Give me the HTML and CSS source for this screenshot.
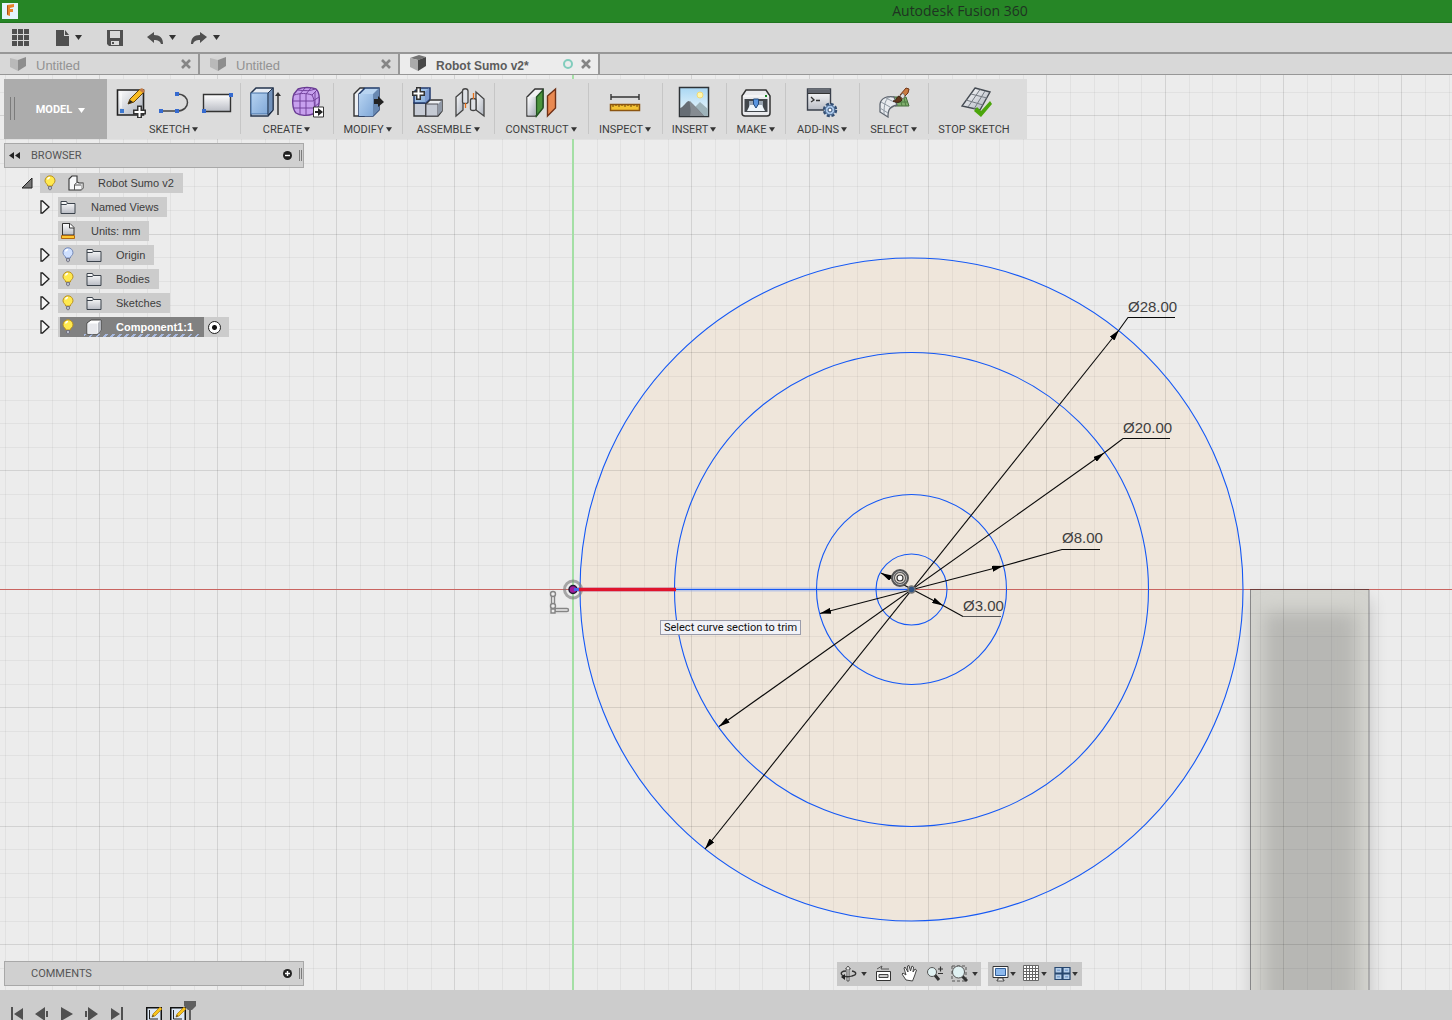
FILE: index.html
```html
<!DOCTYPE html>
<html lang="en">
<head>
<meta charset="utf-8">
<title>Autodesk Fusion 360</title>
<link rel="stylesheet" href="styles.css">
</head>
<body>
<svg class="defs" aria-hidden="true">
  <defs>
    <linearGradient id="metal" x1="0" y1="0" x2="1" y2="1"><stop offset="0" stop-color="#fff"/><stop offset="1" stop-color="#aab0bb"/></linearGradient>
    <linearGradient id="sky" x1="0" y1="0" x2="0" y2="1"><stop offset="0" stop-color="#a9d7f3"/><stop offset="1" stop-color="#f2fafd"/></linearGradient>
    <linearGradient id="blue" x1="0" y1="0" x2="1" y2="1"><stop offset="0" stop-color="#b6d3f1"/><stop offset="1" stop-color="#80a8d8"/></linearGradient>
    <linearGradient id="vert" x1="0" y1="0" x2="0" y2="1"><stop offset="0" stop-color="#fff"/><stop offset="1" stop-color="#b9bcc4"/></linearGradient>
  </defs>
  <symbol id="caret" viewBox="0 0 7 5"><path d="M0 0h7L3.500 5z" fill="currentColor"/></symbol>
  <symbol id="cube" viewBox="0 0 16 16"><path d="M0 3 9 0l7 2-8 3z" fill="#d5d5d5"/><path d="M0 3l8 2v11l-8-4z" fill="#b9b9b9"/><path d="M8 5l8-3v9l-8 5z" fill="#8d8d8d"/></symbol>
  <symbol id="cube-dark" viewBox="0 0 16 16"><path d="M0 3 9 0l7 2-8 3z" fill="#747474"/><path d="M0 3l8 2v11l-8-4z" fill="#aaa"/><path d="M8 5l8-3v9l-8 5z" fill="#484848"/></symbol>
  <symbol id="close" viewBox="0 0 10 10"><path d="M1 1l8 8M9 1L1 9" stroke="#858585" stroke-width="2.600"/></symbol>
  <symbol id="bulb" viewBox="0 0 12 16"><path d="M6 .8a5 5 0 0 1 5 5C11 8.300 8.500 8.700 8.300 11H3.700C3.500 8.700 1 8.300 1 5.800a5 5 0 0 1 5-5z" fill="#ffe94f" stroke="#b99020"/><path d="M3.500 4.500c.5-1.500 1.500-2 2.500-2" stroke="#fff" stroke-width="1.400" fill="none"/><path d="M4.500 11.500h3v2.500L6 15l-1.500-1z" fill="#b7bcc8" stroke="#667" stroke-width=".8"/></symbol>
  <symbol id="bulb-off" viewBox="0 0 12 16"><path d="M6 .8a5 5 0 0 1 5 5C11 8.300 8.500 8.700 8.300 11H3.700C3.500 8.700 1 8.300 1 5.800a5 5 0 0 1 5-5z" fill="#cfe0ff" stroke="#7388b8"/><path d="M3.500 4.500c.5-1.500 1.500-2 2.500-2" stroke="#fff" stroke-width="1.400" fill="none"/><path d="M4.500 11.500h3v2.500L6 15l-1.500-1z" fill="#b7bcc8" stroke="#667" stroke-width=".8"/></symbol>
  <symbol id="folder" viewBox="0 0 16 16"><path d="M1 14.500v-12h5.500l1 2H15v10z" fill="url(#vert)" stroke="#3b424b"/><path d="M1 5.500h5l1.500-1" fill="none" stroke="#3b424b"/></symbol>
  <symbol id="twisty" viewBox="0 0 10 14"><path d="M1 1h1.500L9 7l-6.500 6H1z" fill="#f5f5f5" stroke="#222" stroke-width="1.300"/></symbol>
  <symbol id="sketch-tl" viewBox="0 0 16 16"><path d="M.75 .75h14.500v14.500H.75z" fill="#dce8f5" stroke="#111" stroke-width="1.500"/><path d="M3.500 3v9H12" fill="none" stroke="#222"/><path d="M6 10l1-3 7-7 2 2-7 7z" fill="#f8c51c" stroke="#a8760a" stroke-width=".7"/><path d="M6 10l1-2 1 1z" fill="#222"/></symbol>
</svg>

<header class="titlebar">
  <svg class="logo" width="16" height="16" viewBox="0 0 16 16" role="img" aria-label="Fusion"><path d="M0 0h16v16H0z" fill="#e4f4fd"/><path d="M5 2l7-1v3l-4 1v1h3v3H8v4l-3-1z" fill="#e8842a"/><path d="M5 2l1 1v9l-1-1z" fill="#a84e15"/></svg>
  <h1>Autodesk Fusion 360</h1>
</header>

<nav class="quick" aria-label="Quick access">
  <button class="q-grid" aria-label="Data panel"><svg width="17" height="17"><path d="M0 0h5v5H0zM6 0h5v5H6zM12 0h5v5h-5zM0 6h5v5H0zM6 6h5v5H6zM12 6h5v5h-5zM0 12h5v5H0zM6 12h5v5H6zM12 12h5v5h-5z" fill="#505050"/></svg></button>
  <button class="q-file" aria-label="File"><svg width="13" height="16"><path d="M0 0h8v6h5v10H0zM9 0l4 5H9z" fill="#505050"/></svg><svg class="caret"><use href="#caret"/></svg></button>
  <button class="q-save" aria-label="Save"><svg width="16" height="16"><path d="M0 0h16v16H2l-2-2z" fill="#505050"/><path d="M3 1h10v7H3zM4 11h8v4H4z" fill="#dadada"/><path d="M5 12h2v2H5z" fill="#505050"/></svg></button>
  <button class="q-undo" aria-label="Undo"><svg width="16" height="12"><path d="M0 5l7-5v3c6 0 9 3 9 9h-2c-1-3-3-4-7-4v3z" fill="#505050"/></svg><svg class="caret"><use href="#caret"/></svg></button>
  <button class="q-redo" aria-label="Redo"><svg width="16" height="12"><path d="M16 5L9 0v3C3 3 0 6 0 12h2c1-3 3-4 7-4v3z" fill="#505050"/></svg><svg class="caret"><use href="#caret"/></svg></button>
</nav>

<div class="tabs">
  <div class="tab"><svg width="16" height="16"><use href="#cube"/></svg><a href="#doc1">Untitled</a><button aria-label="Close"><svg width="10" height="10"><use href="#close"/></svg></button></div>
  <div class="tab"><svg width="16" height="16"><use href="#cube"/></svg><a href="#doc2">Untitled</a><button aria-label="Close"><svg width="10" height="10"><use href="#close"/></svg></button></div>
  <div class="tab active"><svg width="16" height="16"><use href="#cube-dark"/></svg><a href="#doc3">Robot Sumo v2*</a><i class="status"></i><button aria-label="Close"><svg width="10" height="10"><use href="#close"/></svg></button></div>
</div>

<main class="workspace">
  <svg class="canvas" aria-label="Sketch canvas">
    <defs>
      <pattern id="grid" patternUnits="userSpaceOnUse" x="573" y="589" width="592" height="592">
        <path stroke="#000" stroke-opacity=".048" d="M24.500 0v592M47.500 0v592M71.500 0v592M95.500 0v592M142.500 0v592M166.500 0v592M189.500 0v592M213.500 0v592M260.500 0v592M284.500 0v592M308.500 0v592M332.500 0v592M379.500 0v592M403.500 0v592M426.500 0v592M450.500 0v592M497.500 0v592M521.500 0v592M545.500 0v592M568.500 0v592M0 24.500h592M0 47.500h592M0 71.500h592M0 95.500h592M0 142.500h592M0 166.500h592M0 189.500h592M0 213.500h592M0 260.500h592M0 284.500h592M0 308.500h592M0 332.500h592M0 379.500h592M0 403.500h592M0 426.500h592M0 450.500h592M0 497.500h592M0 521.500h592M0 545.500h592M0 568.500h592"/>
        <path stroke="#000" stroke-opacity=".11" d="M.5 0v592M118.500 0v592M236.500 0v592M355.500 0v592M473.500 0v592M0 .5h592M0 118.500h592M0 237.500h592M0 355.500h592M0 473.500h592"/>
      </pattern>
      <filter id="soft" x="-50%" y="-20%" width="200%" height="140%"><feGaussianBlur stdDeviation="9"/></filter>
      <clipPath id="body-clip"><path d="M1250 589h119v2000h-119z"/></clipPath>
      <marker id="arrow" viewBox="0 0 11 6" refX="11" refY="3" markerWidth="11" markerHeight="6" markerUnits="userSpaceOnUse" orient="auto-start-reverse"><path d="M0 0l11 3-11 3z" fill="#000"/></marker>
    </defs>
    <g transform="translate(0 -75)">
      <path d="M1252 600h118v2000h-118z" fill="#000" opacity=".18" filter="url(#soft)"/>
      <path d="M1250 589h119v2000h-119z" fill="#d4d4cf"/>
      <g clip-path="url(#body-clip)"><path d="M1264 612h93v2000h-93z" fill="#b7b7b4" filter="url(#soft)"/></g>
      <circle cx="911.500" cy="589.500" r="331.500" fill="#efe6db"/>
      <rect y="0" width="100%" height="200%" fill="url(#grid)"/>
      <path d="M1250.500 2000V589.500M1369 2000V589.500" stroke="#55555a" stroke-opacity=".6" fill="none"/>
      <path d="M573 0v2000" stroke="#a4dfa5" stroke-width="2"/>
      <path d="M0 589.500h4000" stroke="#c96460"/>
      <path d="M1250 589.500h119" stroke="#703c3a"/>
      <path d="M573 589.500h338" stroke="#8aa6ee" stroke-opacity=".5" stroke-width="4"/>
      <g fill="none" stroke="#1458f5" stroke-width="1.100"><circle cx="911.500" cy="589.500" r="331.500"/><circle cx="911.500" cy="589.500" r="237"/><circle cx="911.500" cy="589.500" r="95"/><circle cx="911.500" cy="589.500" r="35.500"/><path d="M573 589.500h338"/></g>
      <g fill="none" stroke="#0a0a0a" stroke-width="1.100">
        <path d="M705 849L1119 330" marker-start="url(#arrow)" marker-end="url(#arrow)"/><path d="M1119 330l9-12.500h47"/>
        <path d="M719 726.500L1104 453" marker-start="url(#arrow)" marker-end="url(#arrow)"/><path d="M1104 453l19-14.500h47"/>
        <path d="M820 613.500L1003 566" marker-start="url(#arrow)" marker-end="url(#arrow)"/><path d="M1003 566l59-16.500h38"/>
        <path d="M881 573L943 605.500" marker-start="url(#arrow)" marker-end="url(#arrow)"/><path d="M943 605.500l20 11"/><path d="M963 616.500h38" stroke="#555"/>
      </g>
      <g class="dims"><text x="1128" y="312">Ø28.00</text><text x="1123" y="433">Ø20.00</text><text x="1062" y="543">Ø8.00</text><text x="963" y="611">Ø3.00</text></g>
      <circle cx="573" cy="589.500" r="8.500" fill="none" stroke="#777" stroke-opacity=".6" stroke-width="3"/>
      <path d="M578 589.500h98" stroke="#e0142c" stroke-width="3.400"/>
      <circle cx="573" cy="589.500" r="4" fill="#a01c9c" stroke="#241a33" stroke-width="1.500"/><path d="M574 589.500h5" stroke="#4565e8" stroke-width="3"/>
      <circle cx="911.500" cy="589.500" r="3.500" fill="#315587" stroke="#777" stroke-width="1.500"/>
      <circle cx="900" cy="578" r="7" fill="#e4ddd4" stroke="#555" stroke-width="4"/><circle cx="900" cy="578" r="6.500" fill="none" stroke="#bbb"/><circle cx="900" cy="578" r="3" fill="#fff" stroke="#333" stroke-width="1.200"/>
      <g fill="#eee" stroke="#858585" stroke-width="1.400"><path d="M551.500 595h3v12h-3zM555 608.500h12a1.500 1.500 0 0 1 0 3h-12z"/><circle cx="553" cy="594" r="2.500"/><circle cx="553" cy="606" r="2.500"/><path d="M551 609h4v4h-4z"/></g>
    </g>
  </svg>
  <div class="tooltip" role="tooltip">Select curve section to trim</div>

  <div class="ribbon">
    <button class="model"><i class="grip"></i><span>MODEL</span><svg class="caret"><use href="#caret"/></svg></button>
    <section class="group g-sketch"><div class="icons">
      <button aria-label="Create sketch"><svg width="32" height="32"><path d="M2.500 4h26v25h-26z" fill="url(#metal)" stroke="#222" stroke-width="1.600"/><path d="M6 7v15" stroke="#fff"/><path d="M5 23h4v4H5z" fill="#3c78d0"/><path d="M13 18l2-5L25 3l4 3-10 10z" fill="#f8bc20" stroke="#65430a"/><path d="M24 4l4 3 2-2-3-3z" fill="#c47a44"/><path d="M13 18l2-4 3 2z" fill="#222"/><path d="M22 19.500h5v4h4v5h-4V32h-5v-3.500h-4v-5h4z" fill="#333"/><path d="M23.500 21h2v4h4v2h-4v4h-2v-4h-4v-2h4z" fill="#fff"/></svg></button>
      <button aria-label="Line"><svg width="32" height="32"><path d="M3 25h16c14 0 14-17 0-17" fill="none" stroke="#444" stroke-width="1.500"/><path d="M1 23h4v4H1zM17 23h4v4h-4zM17 6h4v4h-4z" fill="#366bd0"/></svg></button>
      <button aria-label="Rectangle"><svg width="32" height="32"><path d="M2.500 8.500h27v17h-27z" fill="url(#vert)" stroke="#333" stroke-width="1.400"/><path d="M1 23h4v4H1zM28 7h4v4h-4z" fill="#366bd0"/></svg></button>
    </div><button class="label">SKETCH <svg class="caret"><use href="#caret"/></svg></button></section>
    <section class="group g-create"><div class="icons">
      <button aria-label="Extrude"><svg width="32" height="32"><path d="M2 7l5-5h17v22l-5 6H2z" fill="#e7edf5" stroke="#25344d" stroke-width="1.500"/><path d="M2 7h17v21H2z" fill="url(#blue)" stroke="#4470a5"/><path d="M19 7l5-5v22l-5 5z" fill="#7292bb" stroke="#25344d"/><path d="M29 29V8" stroke="#333" stroke-width="1.500"/><path d="M26 10l3-4 3 4z" fill="#333"/></svg></button>
      <button aria-label="Create form"><svg width="32" height="32"><path d="M6 3c5-2 13-2 18 0 4 3 4 14 2 19l-5 6c-5 2-13 2-17-1C0 23 0 12 2 8z" fill="#c7a0ee" stroke="#693b93" stroke-width="1.400"/><path d="M2 9c7-2 12-2 18 0 3 5 3 13 1 19M8 8v21M14 8v22M1 15h20M1 22h20M6 4c6 1 13 1 17-1M20 9l5-5M21 15l6-4M21 22l6-5M13 2l-5 6M19 2l-5 6M23 6v19" fill="none" stroke="#72429c"/><path d="M21.500 21h10v10h-10z" fill="#fff" stroke="#333"/><path d="M23 25h3v-3l5 4-5 4v-3h-3z" fill="#222"/></svg></button>
    </div><button class="label">CREATE <svg class="caret"><use href="#caret"/></svg></button></section>
    <section class="group g-modify"><div class="icons">
      <button aria-label="Press pull"><svg width="32" height="32"><path d="M2 8l6-6h4v28H2z" fill="#eceff3" stroke="#333" stroke-width="1.400"/><path d="M7 8l6-6h14v22l-6 6H7z" fill="#b8d4f1" stroke="#203b6a" stroke-width="1.500"/><path d="M7 8h14v22H7z" fill="url(#blue)"/><path d="M21 8l6-6v22l-6 6z" fill="#6888b1"/><path d="M22 13h4v-3l6 6-6 5v-3h-4z" fill="#222"/></svg></button>
    </div><button class="label">MODIFY <svg class="caret"><use href="#caret"/></svg></button></section>
    <section class="group g-assemble"><div class="icons">
      <button aria-label="New component"><svg width="32" height="32"><path d="M3 17h12v13H3z" fill="#c7ccd6" stroke="#333" stroke-width="1.400"/><path d="M15 18l4-4h12v11l-4 5H15z" fill="#eceef2" stroke="#333" stroke-width="1.400"/><path d="M15 18h12v12H15z" fill="#c5cad4" stroke="#4c4c55"/><path d="M27 18l4-4v11l-4 4z" fill="#9098a6"/><path d="M3 6l4-4h12v11l-5 4H3z" fill="url(#blue)" stroke="#20396c" stroke-width="1.500"/><path d="M14 6l4-4v11l-4 4z" fill="#7c9acf"/><path d="M5 1h5v4h4v5h-4v4H5v-4H1V5h4z" fill="#333"/><path d="M6.500 2.500h2v4h4v2h-4v4h-2v-4h-4v-2h4z" fill="#fff"/></svg></button>
      <button aria-label="Joint"><svg width="32" height="32"><path d="M2 11l7-6v19l-7 6z" fill="url(#metal)" stroke="#444" stroke-width="1.300"/><path d="M8.500 5c0-3 5.500-3 5.500 0v11c0 2-5.500 2-5.500 0z" fill="#dfe2e7" stroke="#444" stroke-width="1.300"/><path d="M22 6l8 7v17l-8-6z" fill="url(#metal)" stroke="#444" stroke-width="1.300"/><path d="M16.500 14c0-2 5.500-2 5.500 0v9c0 2-5.500 2-5.500 0z" fill="#dfe2e7" stroke="#444" stroke-width="1.300"/><path d="M11.500 17v5M19.500 7v6" stroke="#e86f16" stroke-width="1.300"/></svg></button>
    </div><button class="label">ASSEMBLE <svg class="caret"><use href="#caret"/></svg></button></section>
    <section class="group g-construct"><div class="icons">
      <button aria-label="Offset plane"><svg width="32" height="32"><path d="M2 11l8-8h8v18l-7 9H2z" fill="#f1f1f2" stroke="#333" stroke-width="1.400"/><path d="M2.500 11h8v18.500h-8z" fill="url(#metal)"/><path d="M11.500 11l6.500-7v18l-6.500 8z" fill="#4a943c" stroke="#235323" stroke-width="1.400"/><path d="M22.500 10l8-7v19l-8 8z" fill="#e98951" stroke="#713116" stroke-width="1.400"/></svg></button>
    </div><button class="label">CONSTRUCT <svg class="caret"><use href="#caret"/></svg></button></section>
    <section class="group g-inspect"><div class="icons">
      <button aria-label="Measure"><svg width="32" height="32"><path d="M2 8v6M30 8v6M2 11h28" stroke="#333" stroke-width="1.400"/><path d="M1.500 18.500h29v6h-29z" fill="#f3c232" stroke="#8c5510" stroke-width="1.500"/><path d="M4 19v2M7 19v1M10 19v2M13 19v1M16 19v2M19 19v1M22 19v2M25 19v1M28 19v2" stroke="#704409"/></svg></button>
    </div><button class="label">INSPECT <svg class="caret"><use href="#caret"/></svg></button></section>
    <section class="group g-insert"><div class="icons">
      <button aria-label="Insert image"><svg width="32" height="32"><path d="M1.500 1.500h29v29h-29z" fill="url(#sky)" stroke="#2e3337" stroke-width="1.500"/><circle cx="22" cy="9" r="3" fill="#fff7ac" stroke="#f1da76"/><path d="M14 24l8-8 8 7v7H14z" fill="#9eb3ba"/><path d="M2 22c4-1 6-7 9-7 3 2 9 8 15 15H2z" fill="#666d74"/><path d="M12 15c-1 5 2 7 0 15h14z" fill="#858b91"/></svg></button>
    </div><button class="label">INSERT <svg class="caret"><use href="#caret"/></svg></button></section>
    <section class="group g-make"><div class="icons">
      <button aria-label="3D print"><svg width="32" height="32"><path d="M2 10l4-6h20l4 6v17c0 2-1 3-3 3H5c-2 0-3-1-3-3z" fill="#e9eaed" stroke="#333" stroke-width="1.500"/><path d="M3 10h26" stroke="#fff"/><path d="M4.500 13h23v13h-23z" fill="#42474c"/><path d="M9 15h14v9H9z" fill="#9aa6b3"/><path d="M7 25l3-6h12l3 6z" fill="#eef5fa"/><path d="M13.500 13h5v5l-2.500 4-2.500-4z" fill="#5996e1" stroke="#214879"/><path d="M25 9h2v2h-2z" fill="#138a20"/></svg></button>
    </div><button class="label">MAKE <svg class="caret"><use href="#caret"/></svg></button></section>
    <section class="group g-addins"><div class="icons">
      <button aria-label="Scripts"><svg width="32" height="32"><path d="M1.500 3h23v21h-23z" fill="url(#vert)" stroke="#3a404b" stroke-width="1.400"/><path d="M2 4h22v3H2z" fill="#62666f"/><path d="M2 7.500h22" stroke="#333"/><path d="M5 11l3 3-3 2M10 14.500h4" stroke="#333" fill="none" stroke-width="1.300"/><circle cx="24" cy="24" r="6" fill="#b9d1ed" stroke="#344f73" stroke-width="2.500" stroke-dasharray="3 1.700"/><circle cx="24" cy="24" r="4.800" fill="#a9c6e8" stroke="#46658d"/><circle cx="24" cy="24" r="2" fill="#fff" stroke="#344f73"/></svg></button>
    </div><button class="label">ADD-INS <svg class="caret"><use href="#caret"/></svg></button></section>
    <section class="group g-select"><div class="icons">
      <button aria-label="Select"><svg width="32" height="32"><path d="M15 11h13l3 9H17z" fill="#7fae6c" stroke="#456c3a"/><path d="M17 16h13M22 12l2 8M26 12l2 8" stroke="#4f7c42"/><path d="M16 11C9 10 3 12 2 18v8l8 5c0-7 1-10 9-12z" fill="#e8ebef" stroke="#5f6670" stroke-width="1.300"/><path d="M12 11c-5 2-6 8-6 17M2 22l8 5M3 16l9 5M8 12l8 4" fill="none" stroke="#909aa4"/><path d="M15 15c4 0 3-4 6-5l3 4c-2 3-6 3-9 1z" fill="#63371c" stroke="#3c2113"/><path d="M22 9l6-7 3 1-1 4-6 6z" fill="#c97a40" stroke="#713516"/><path d="M22 10l3 3 2-3-2-3z" fill="#ddd" stroke="#555" stroke-width=".6"/></svg></button>
    </div><button class="label">SELECT <svg class="caret"><use href="#caret"/></svg></button></section>
    <section class="group g-stop"><div class="icons">
      <button aria-label="Stop sketch"><svg width="32" height="32"><path d="M14 2l15 4-10 18-18-4z" fill="url(#metal)" stroke="#444a52" stroke-width="1.400"/><path d="M10 8l16 4M5 14l17 5M19 3.500L7 21M24 5L13 23" stroke="#747a82"/><path d="M13 25l3-4 4 4 9-10 2 3-11 13z" fill="#4ba50b"/></svg></button>
    </div><button class="label">STOP SKETCH</button></section>
  </div>

  <aside class="browser">
    <div class="panel-head"><svg width="11" height="7"><path d="M5 0v7L0 3.500zM11 0v7L6 3.500z" fill="#222"/></svg><h2>BROWSER</h2><button aria-label="Collapse"><svg width="9" height="9"><circle cx="4.500" cy="4.500" r="4.500" fill="#222"/><path d="M2 4.500h5" stroke="#fff" stroke-width="1.400"/></svg></button><i class="grip"></i></div>
    <ul class="tree">
      <li class="root"><svg class="open" width="12" height="12"><path d="M1 11L11 1v10z" fill="#777" stroke="#222"/></svg><a href="#root"><svg width="12" height="16"><use href="#bulb"/></svg><svg class="kind" width="16" height="16"><path d="M1 4l3-3h5v6l2 1h4v5l-2 2H1z" fill="#f7f8fa" stroke="#333" stroke-width="1.100"/><path d="M6.500 15V9.500l2.500-2M7 10h6" stroke="#555" fill="none"/><path d="M13 10l2-2v5l-2 2z" fill="#bbb"/></svg><span>Robot Sumo v2</span></a></li>
      <li><svg class="tw" width="10" height="14"><use href="#twisty"/></svg><a class="short" href="#views"><svg width="16" height="16"><use href="#folder"/></svg><span>Named Views</span></a></li>
      <li><i class="tw"></i><a class="short" href="#units"><svg width="16" height="16"><path d="M2.500 12V.5H10l4 4V12z" fill="url(#vert)" stroke="#333"/><path d="M9.500 1v4H14" fill="#fff" stroke="#333"/><path d="M1.500 12.500h13v3h-13z" fill="#ffc832" stroke="#b26910"/></svg><span>Units: mm</span></a></li>
      <li><svg class="tw" width="10" height="14"><use href="#twisty"/></svg><a href="#origin"><svg width="12" height="16"><use href="#bulb-off"/></svg><svg class="kind" width="16" height="16"><use href="#folder"/></svg><span>Origin</span></a></li>
      <li><svg class="tw" width="10" height="14"><use href="#twisty"/></svg><a href="#bodies"><svg width="12" height="16"><use href="#bulb"/></svg><svg class="kind" width="16" height="16"><use href="#folder"/></svg><span>Bodies</span></a></li>
      <li><svg class="tw" width="10" height="14"><use href="#twisty"/></svg><a href="#sketches"><svg width="12" height="16"><use href="#bulb"/></svg><svg class="kind" width="16" height="16"><use href="#folder"/></svg><span>Sketches</span></a></li>
      <li class="selected"><svg class="tw" width="10" height="14"><use href="#twisty"/></svg><a href="#component"><svg width="12" height="16"><use href="#bulb"/></svg><svg class="kind" width="16" height="16"><path d="M1 4l4-3h10v10l-3 4H1z" fill="#fff" stroke="#444"/><path d="M12 4l3-3v10l-3 4z" fill="#b5b8bf"/><path d="M1.500 4.500h10V15h-10z" fill="#e7e8ec"/></svg><span>Component1:1</span></a><label class="activate"><input type="radio" name="active" checked aria-label="Activate component"></label></li>
    </ul>
  </aside>

  <div class="bottom">
    <div class="panel-head comments"><h2>COMMENTS</h2><button aria-label="Expand"><svg width="9" height="9"><circle cx="4.500" cy="4.500" r="4.500" fill="#222"/><path d="M2 4.500h5M4.500 2v5" stroke="#fff" stroke-width="1.400"/></svg></button><i class="grip"></i></div>
    <div class="nav">
      <div class="nav-set first">
        <button class="orbit" aria-label="Orbit"><svg width="17" height="17"><path d="M7 16V4H5.500L8 1l2.500 3H9v12z" fill="#eee" stroke="#333" stroke-width=".8"/><path d="M12 6c5 1 5 4 0 5-3 1-7 1-10-1C0 8 2 6 6 6" fill="none" stroke="#333" stroke-width="1.300"/><path d="M1 12l4-3v6z" fill="#222"/></svg><svg class="caret"><use href="#caret"/></svg></button>
        <button class="look" aria-label="Look at"><svg width="17" height="17"><path d="M1.500 6.500h14v9h-14z" fill="#fff" stroke="#333"/><path d="M4 9.500h9v3H4z" fill="#ccc" stroke="#444"/><path d="M2 4l5-3-1 3h8" fill="none" stroke="#555"/></svg></button>
        <button class="pan" aria-label="Pan"><svg width="17" height="17"><path d="M5 15L1 9l1-1 3 2-2-7 1-1 3 5-.5-6L8 .5 9.500 6 11 1l1.500 1-.5 5 2-3 1.500 1-2 6-2 5z" fill="#fff" stroke="#444"/></svg></button>
        <button class="zoom" aria-label="Zoom"><svg width="17" height="17"><path d="M8 9l5 6" stroke="#333" stroke-width="3"/><circle cx="6" cy="7" r="4.500" fill="#e0f1f2" stroke="#555"/><path d="M12 4h5M14.500 1.500v5M12 8.500h5" stroke="#333" stroke-width="1.200"/></svg></button>
        <button class="fit" aria-label="Fit"><svg width="17" height="17"><path d="M1 1h14v15H1z" fill="none" stroke="#555" stroke-dasharray="3 2"/><path d="M11 11l5 5" stroke="#333" stroke-width="3"/><circle cx="7.500" cy="7" r="6" fill="#e0f1f2" stroke="#555"/></svg><svg class="caret"><use href="#caret"/></svg></button>
      </div>
      <div class="nav-set second">
        <button aria-label="Display settings"><svg width="17" height="17"><path d="M1 1.500h15v11H1z" fill="#fff" stroke="#333"/><path d="M3.500 3.500h10v7h-10z" fill="#8db9ed" stroke="#315f99"/><path d="M6 13h5v2h1v1H5v-1h1z" fill="#eee" stroke="#333" stroke-width=".8"/></svg><svg class="caret"><use href="#caret"/></svg></button>
        <button aria-label="Grid and snaps"><svg width="17" height="17"><path d="M.5 .5h15v15H.5z" fill="#fff"/><path d="M.5 .5h15v15H.5zM3.500 0v16M6.500 0v16M9.500 0v16M12.500 0v16M0 3.500h16M0 6.500h16M0 9.500h16M0 12.500h16" fill="none" stroke="#666"/></svg><svg class="caret"><use href="#caret"/></svg></button>
        <button aria-label="Viewports"><svg width="17" height="17"><path d="M1 2.500h7v5.500H1zM9 2.500h7v5.500H9zM1 9h7v5.500H1zM9 9h7v5.500H9z" fill="#b4cde9" stroke="#27476f" stroke-width="1.200"/><path d="M3 5.300h3M11 5.300h3M3 11.800h3M11 11.800h3" stroke="#7fa3d0" stroke-width="1.500"/></svg><svg class="caret"><use href="#caret"/></svg></button>
      </div>
    </div>
  </div>
</main>

<footer class="timeline">
  <div class="play">
    <button aria-label="Go to start"><svg width="14" height="14"><path d="M1 0h2v14H1zM13 1v12L4 7z" fill="#505050"/></svg></button>
    <button aria-label="Step back"><svg width="14" height="14"><path d="M10 0v14L0 7zM11 4h2v6h-2z" fill="#505050"/></svg></button>
    <button aria-label="Play"><svg width="14" height="14"><path d="M1 0v14l12-7z" fill="#505050"/></svg></button>
    <button aria-label="Step forward"><svg width="14" height="14"><path d="M3 0v14l10-7zM0 4h2v6H0z" fill="#505050"/></svg></button>
    <button aria-label="Go to end"><svg width="14" height="14"><path d="M11 0h2v14h-2zM1 1v12l9-6z" fill="#505050"/></svg></button>
  </div>
  <div class="features">
    <button aria-label="Sketch 1"><svg width="16" height="16"><use href="#sketch-tl"/></svg></button>
    <button aria-label="Sketch 2"><svg width="16" height="16"><use href="#sketch-tl"/></svg></button>
    <svg class="playhead" width="12" height="24"><path d="M0 0h12v5L8 9H7v15H5V9H4L0 5z" fill="#606060"/></svg>
  </div>
</footer>
</body>
</html>
```
FILE: styles.css
```css
* { box-sizing: border-box; }
body {
  margin: 0;
  height: 100vh;
  display: flex;
  flex-direction: column;
  overflow: hidden;
  background: #ccc;
  color: #3c3c3c;
  font: 11px/16px Roboto, "Liberation Sans", sans-serif;
}
button { padding: 0; border: 0; background: none; color: inherit; font: inherit; display: flex; align-items: center; }
svg { display: block; flex: none; }
a { color: inherit; text-decoration: none; }
h1, h2 { margin: 0; font-weight: 400; }
ul { margin: 0; padding: 0; list-style: none; }
.defs { position: absolute; width: 0; height: 0; }
.caret { width: 7px; height: 5px; color: #333; }

.titlebar { display: flex; align-items: center; height: 23px; flex: none; background: #268626; border-bottom: 1px solid #1f741f; padding-left: 2px; }
.titlebar h1 { flex: 1; padding-left: 450px; text-align: center; color: #1f3322; font: 14px/22px "Open Sans", sans-serif; }

.quick { display: flex; align-items: center; height: 29px; flex: none; padding-left: 12px; background: #d8d8d8; }
.quick button { gap: 6px; }
.q-file { margin-left: 27px; }
.q-save { margin-left: 25px; }
.q-undo { margin-left: 24px; }
.q-redo { margin-left: 15px; }

.tabs { display: flex; height: 23px; flex: none; background: #d8d8d8; border-top: 2px solid #979797; border-bottom: 1px solid #979797; }
.tab { display: flex; align-items: center; width: 200px; padding: 0 7px 0 10px; border-right: 2px solid #979797; color: #929292; font: 13px/20px "Liberation Sans", sans-serif; }
.tab > svg { margin-top: -2px; }
.tab a { flex: 1; margin-left: 10px; padding-top: 4px; }
.tab.active { background: #ececec; color: #5c5c5c; font-size: 12px; font-weight: 700; }
.status { width: 10px; height: 10px; margin-right: 8px; border: 2px solid #82cdbd; border-radius: 50%; }

.workspace { position: relative; flex: 1; min-height: 0; display: flex; flex-direction: column; padding: 4px; background: #ececec; }
.workspace > * { position: relative; }
.workspace > .canvas { position: absolute; left: 0; top: 0; width: 100%; height: 100%; }
.dims text { font: 15px "Liberation Sans", sans-serif; fill: #3f3f3f; }
.workspace > .tooltip { position: absolute; left: 660px; top: 545px; padding: 0 3px; background: #f1f2f7; border: 1px solid #9a9cab; color: #111; font: 11px/13px Roboto, sans-serif; white-space: nowrap; }

.ribbon { display: flex; align-self: flex-start; height: 60px; padding-right: 7px; background: #dcdcdc; }
.model { position: relative; width: 103px; justify-content: center; gap: 6px; padding: 2px 0 0 10px; background: #acacac; color: #fff; font-weight: 700; }
.model .caret { color: #fff; }
.grip { width: 5px; border: solid #7c7c7c; border-width: 0 1px; }
.model .grip { position: absolute; left: 6px; top: 18px; height: 23px; }
.group { position: relative; display: flex; flex-direction: column; align-items: center; padding-top: 7px; }
.group + .group::before { content: ""; position: absolute; left: 0; top: 4px; height: 51px; border-left: 1px solid #c6c6c6; }
.icons { display: flex; gap: 11px; height: 36px; }
.icons button { height: 32px; }
.label { gap: 2px; height: 18px; white-space: nowrap; }
.label .caret { width: 6px; margin-bottom: 2px; }
.g-sketch { width: 133px; }
.g-create { width: 93px; }
.g-modify { width: 69px; }
.g-assemble { width: 92px; }
.g-construct { width: 94px; }
.g-inspect { width: 74px; }
.g-insert { width: 64px; }
.g-make { width: 59px; }
.g-addins { width: 74px; }
.g-select { width: 69px; }
.g-stop { width: 92px; }
.g-stop .icons { padding-left: 6px; }

.browser { width: 300px; margin-top: 4px; }
.panel-head { display: flex; align-items: center; height: 25px; padding-left: 4px; background: #d0d0d0; border: 1px solid #a8a8a8; color: #555; }
.panel-head h2 { flex: 1; margin-left: 11px; font-size: 11px; }
.panel-head .grip { width: 3px; height: 11px; margin-left: 7px; margin-right: 1px; }
.tree { display: grid; gap: 4px; margin-top: 5px; font: 11px/20px "Liberation Sans", sans-serif; }
.tree li { display: flex; align-items: center; height: 20px; padding-left: 36px; }
.tree .root { padding-left: 17px; }
.tree .tw { width: 10px; margin-right: 8px; }
.tree .open { margin-right: 7px; }
.tree a { display: flex; align-items: center; height: 20px; padding: 0 9px 0 4px; background: #ccc; }
.tree .short { padding: 0 8px 0 2px; }
.tree .kind { margin-left: 12px; }
.tree span { margin-left: 14px; }
.tree .short span { margin-left: 15px; }
.tree .selected a { padding-right: 11px; background: repeating-linear-gradient(135deg, #a9bbe2 0 2px, #818181 2px 5px) 24px 100% / 118px 3px no-repeat #818181; border-left: 2px solid #ccc; padding-left: 2px; color: #fff; font-weight: 700; }
.activate { display: flex; align-items: center; width: 25px; height: 20px; padding-left: 4px; background: #ccc; }
.activate input { appearance: none; width: 13px; height: 13px; margin: 0; border: 1px solid #222; border-radius: 50%; background: radial-gradient(#111 0 2px, #fff 3px); }

.bottom { display: grid; grid-template-columns: 300px 533fr auto 366fr; align-items: center; margin-top: auto; }
.comments { padding-left: 15px; }
.nav { grid-column: 3; display: flex; gap: 7px; }
.nav-set { display: flex; align-items: center; height: 24px; background: #c8c8c8; }
.nav-set.first { width: 144px; padding: 0 3px; justify-content: space-between; }
.nav-set.second { width: 94px; padding: 0 4px; justify-content: space-between; }
.nav-set button { gap: 1px; }
.nav-set .caret { width: 6px; height: 4px; }
.nav-set .orbit, .nav-set .fit { gap: 4px; }

.timeline { display: flex; height: 30px; flex: none; overflow: hidden; padding: 17px 0 0 10px; background: #ccc; }
.play { display: flex; gap: 11px; height: 14px; }
.features { position: relative; display: flex; gap: 8px; height: 16px; margin-left: 22px; }
.playhead { position: absolute; left: 38px; top: -6px; }
```
